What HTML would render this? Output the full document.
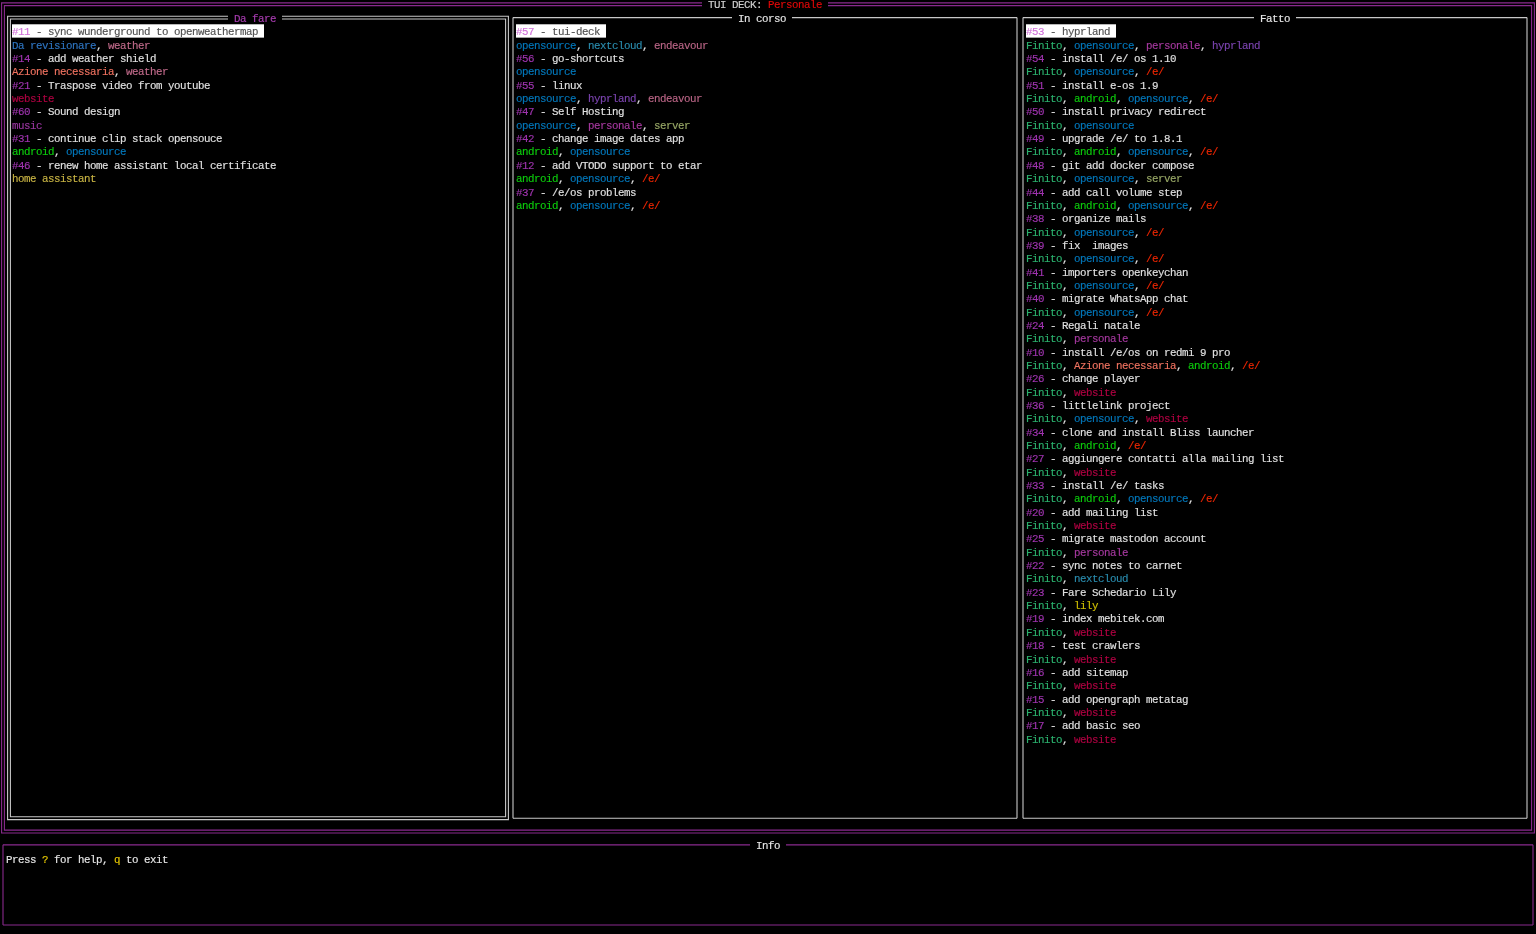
<!DOCTYPE html>
<html><head><meta charset="utf-8"><title>TUI DECK</title>
<style>
html,body{margin:0;padding:0;background:#000;}
body{width:1536px;height:934px;overflow:hidden;position:relative;}
.w{position:absolute;left:0;top:0;width:1536px;height:934px;background:#000;}
svg{position:absolute;left:0;top:0;}
.t{position:absolute;left:0;top:0;width:1536px;height:934px;will-change:transform;}
.l{position:absolute;white-space:pre;font-family:"Liberation Mono",monospace;font-size:10.8px;letter-spacing:-0.481px;line-height:13.343px;height:13.343px;color:#e6e6e6;-webkit-text-stroke:0.15px currentColor;}
.hl{background:#ffffff;}
</style></head><body><div class="w">
<svg width="1536" height="934" viewBox="0 0 1536 934">
<path d="M702.00 2.87H1.60V832.93H1534.40V2.87H828.00" stroke="#8a2a8e" stroke-width="1.1" fill="none"/>
<path d="M702.00 5.67H4.40V830.13H1531.60V5.67H828.00" stroke="#8a2a8e" stroke-width="1.1" fill="none"/>
<path d="M228.00 16.21H7.60V819.59H508.40V16.21H282.00" stroke="#c8c8c8" stroke-width="1.1" fill="none"/>
<path d="M228.00 19.01H10.40V816.79H505.60V19.01H282.00" stroke="#c8c8c8" stroke-width="1.1" fill="none"/>
<path d="M513.00 17.61H732.00" stroke="#c8c8c8" stroke-width="1.1" fill="none"/>
<path d="M792.00 17.61H1017.00" stroke="#c8c8c8" stroke-width="1.1" fill="none"/>
<path d="M513.00 818.19H1017.00" stroke="#c8c8c8" stroke-width="1.1" fill="none"/>
<path d="M513.00 17.61V818.19" stroke="#c8c8c8" stroke-width="1.1" fill="none"/>
<path d="M1017.00 17.61V818.19" stroke="#c8c8c8" stroke-width="1.1" fill="none"/>
<path d="M1023.00 17.61H1254.00" stroke="#c8c8c8" stroke-width="1.1" fill="none"/>
<path d="M1296.00 17.61H1527.00" stroke="#c8c8c8" stroke-width="1.1" fill="none"/>
<path d="M1023.00 818.19H1527.00" stroke="#c8c8c8" stroke-width="1.1" fill="none"/>
<path d="M1023.00 17.61V818.19" stroke="#c8c8c8" stroke-width="1.1" fill="none"/>
<path d="M1527.00 17.61V818.19" stroke="#c8c8c8" stroke-width="1.1" fill="none"/>
<path d="M3.00 844.87H750.00" stroke="#8a2a8e" stroke-width="1.1" fill="none"/>
<path d="M786.00 844.87H1533.00" stroke="#8a2a8e" stroke-width="1.1" fill="none"/>
<path d="M3.00 924.93H1533.00" stroke="#8a2a8e" stroke-width="1.1" fill="none"/>
<path d="M3.00 844.87V924.93" stroke="#8a2a8e" stroke-width="1.1" fill="none"/>
<path d="M1533.00 844.87V924.93" stroke="#8a2a8e" stroke-width="1.1" fill="none"/>
<rect x="12.00" y="24.29" width="252.00" height="13.343" fill="#ffffff"/>
<rect x="516.00" y="24.29" width="90.00" height="13.343" fill="#ffffff"/>
<rect x="1026.00" y="24.29" width="90.00" height="13.343" fill="#ffffff"/>
</svg>
<div class="t">
<div class="l" style="left:708px;top:-1.30px"><span style="color:#d0d0d0">TUI DECK: </span><span style="color:#e00808">Personale</span></div>
<div class="l" style="left:234px;top:13.04px"><span style="color:#a83cb0">Da fare</span></div>
<div class="l" style="left:738px;top:13.04px"><span style="color:#e6e6e6">In corso</span></div>
<div class="l" style="left:1260px;top:13.04px"><span style="color:#e6e6e6">Fatto</span></div>
<div class="l" style="left:756px;top:840.30px"><span style="color:#e6e6e6">Info</span></div>
<div class="l" style="left:6px;top:853.64px"><span style="color:#e6e6e6">Press </span><span style="color:#e6c800">?</span><span style="color:#e6e6e6"> for help, </span><span style="color:#e6c800">q</span><span style="color:#e6e6e6"> to exit</span></div>
<div class="l" style="left:12px;top:26.39px"><span style="color:#d070d8">#11</span><span style="color:#505050"> - sync wunderground to openweathermap </span></div>
<div class="l" style="left:12px;top:39.73px"><span style="color:#2e74c0">Da revisionare</span><span style="color:#e0e0e0">, </span><span style="color:#c06a8a">weather</span></div>
<div class="l" style="left:12px;top:53.07px"><span style="color:#a034b0">#14</span><span style="color:#e0e0e0"> - add weather shield</span></div>
<div class="l" style="left:12px;top:66.41px"><span style="color:#f07260">Azione necessaria</span><span style="color:#e0e0e0">, </span><span style="color:#c06a8a">weather</span></div>
<div class="l" style="left:12px;top:79.76px"><span style="color:#a034b0">#21</span><span style="color:#e0e0e0"> - Traspose video from youtube</span></div>
<div class="l" style="left:12px;top:93.10px"><span style="color:#b00042">website</span></div>
<div class="l" style="left:12px;top:106.44px"><span style="color:#a034b0">#60</span><span style="color:#e0e0e0"> - Sound design</span></div>
<div class="l" style="left:12px;top:119.79px"><span style="color:#9a36a0">music</span></div>
<div class="l" style="left:12px;top:133.13px"><span style="color:#a034b0">#31</span><span style="color:#e0e0e0"> - continue clip stack opensouce</span></div>
<div class="l" style="left:12px;top:146.47px"><span style="color:#0ccc0c">android</span><span style="color:#e0e0e0">, </span><span style="color:#0078bc">opensource</span></div>
<div class="l" style="left:12px;top:159.81px"><span style="color:#a034b0">#46</span><span style="color:#e0e0e0"> - renew home assistant local certificate</span></div>
<div class="l" style="left:12px;top:173.16px"><span style="color:#c8b444">home assistant</span></div>
<div class="l" style="left:516px;top:26.39px"><span style="color:#d070d8">#57</span><span style="color:#505050"> - tui-deck </span></div>
<div class="l" style="left:516px;top:39.73px"><span style="color:#0078bc">opensource</span><span style="color:#e0e0e0">, </span><span style="color:#2a8cae">nextcloud</span><span style="color:#e0e0e0">, </span><span style="color:#ba6586">endeavour</span></div>
<div class="l" style="left:516px;top:53.07px"><span style="color:#a034b0">#56</span><span style="color:#e0e0e0"> - go-shortcuts</span></div>
<div class="l" style="left:516px;top:66.41px"><span style="color:#0078bc">opensource</span></div>
<div class="l" style="left:516px;top:79.76px"><span style="color:#a034b0">#55</span><span style="color:#e0e0e0"> - linux</span></div>
<div class="l" style="left:516px;top:93.10px"><span style="color:#0078bc">opensource</span><span style="color:#e0e0e0">, </span><span style="color:#7c44b0">hyprland</span><span style="color:#e0e0e0">, </span><span style="color:#ba6586">endeavour</span></div>
<div class="l" style="left:516px;top:106.44px"><span style="color:#a034b0">#47</span><span style="color:#e0e0e0"> - Self Hosting</span></div>
<div class="l" style="left:516px;top:119.79px"><span style="color:#0078bc">opensource</span><span style="color:#e0e0e0">, </span><span style="color:#a6389f">personale</span><span style="color:#e0e0e0">, </span><span style="color:#98a866">server</span></div>
<div class="l" style="left:516px;top:133.13px"><span style="color:#a034b0">#42</span><span style="color:#e0e0e0"> - change image dates app</span></div>
<div class="l" style="left:516px;top:146.47px"><span style="color:#0ccc0c">android</span><span style="color:#e0e0e0">, </span><span style="color:#0078bc">opensource</span></div>
<div class="l" style="left:516px;top:159.81px"><span style="color:#a034b0">#12</span><span style="color:#e0e0e0"> - add VTODO support to etar</span></div>
<div class="l" style="left:516px;top:173.16px"><span style="color:#0ccc0c">android</span><span style="color:#e0e0e0">, </span><span style="color:#0078bc">opensource</span><span style="color:#e0e0e0">, </span><span style="color:#ec2600">/e/</span></div>
<div class="l" style="left:516px;top:186.50px"><span style="color:#a034b0">#37</span><span style="color:#e0e0e0"> - /e/os problems</span></div>
<div class="l" style="left:516px;top:199.84px"><span style="color:#0ccc0c">android</span><span style="color:#e0e0e0">, </span><span style="color:#0078bc">opensource</span><span style="color:#e0e0e0">, </span><span style="color:#ec2600">/e/</span></div>
<div class="l" style="left:1026px;top:26.39px"><span style="color:#d070d8">#53</span><span style="color:#505050"> - hyprland </span></div>
<div class="l" style="left:1026px;top:39.73px"><span style="color:#2bb26e">Finito</span><span style="color:#e0e0e0">, </span><span style="color:#0078bc">opensource</span><span style="color:#e0e0e0">, </span><span style="color:#a6389f">personale</span><span style="color:#e0e0e0">, </span><span style="color:#7c44b0">hyprland</span></div>
<div class="l" style="left:1026px;top:53.07px"><span style="color:#a034b0">#54</span><span style="color:#e0e0e0"> - install /e/ os 1.10</span></div>
<div class="l" style="left:1026px;top:66.41px"><span style="color:#2bb26e">Finito</span><span style="color:#e0e0e0">, </span><span style="color:#0078bc">opensource</span><span style="color:#e0e0e0">, </span><span style="color:#ec2600">/e/</span></div>
<div class="l" style="left:1026px;top:79.76px"><span style="color:#a034b0">#51</span><span style="color:#e0e0e0"> - install e-os 1.9</span></div>
<div class="l" style="left:1026px;top:93.10px"><span style="color:#2bb26e">Finito</span><span style="color:#e0e0e0">, </span><span style="color:#0ccc0c">android</span><span style="color:#e0e0e0">, </span><span style="color:#0078bc">opensource</span><span style="color:#e0e0e0">, </span><span style="color:#ec2600">/e/</span></div>
<div class="l" style="left:1026px;top:106.44px"><span style="color:#a034b0">#50</span><span style="color:#e0e0e0"> - install privacy redirect</span></div>
<div class="l" style="left:1026px;top:119.79px"><span style="color:#2bb26e">Finito</span><span style="color:#e0e0e0">, </span><span style="color:#0078bc">opensource</span></div>
<div class="l" style="left:1026px;top:133.13px"><span style="color:#a034b0">#49</span><span style="color:#e0e0e0"> - upgrade /e/ to 1.8.1</span></div>
<div class="l" style="left:1026px;top:146.47px"><span style="color:#2bb26e">Finito</span><span style="color:#e0e0e0">, </span><span style="color:#0ccc0c">android</span><span style="color:#e0e0e0">, </span><span style="color:#0078bc">opensource</span><span style="color:#e0e0e0">, </span><span style="color:#ec2600">/e/</span></div>
<div class="l" style="left:1026px;top:159.81px"><span style="color:#a034b0">#48</span><span style="color:#e0e0e0"> - git add docker compose</span></div>
<div class="l" style="left:1026px;top:173.16px"><span style="color:#2bb26e">Finito</span><span style="color:#e0e0e0">, </span><span style="color:#0078bc">opensource</span><span style="color:#e0e0e0">, </span><span style="color:#98a866">server</span></div>
<div class="l" style="left:1026px;top:186.50px"><span style="color:#a034b0">#44</span><span style="color:#e0e0e0"> - add call volume step</span></div>
<div class="l" style="left:1026px;top:199.84px"><span style="color:#2bb26e">Finito</span><span style="color:#e0e0e0">, </span><span style="color:#0ccc0c">android</span><span style="color:#e0e0e0">, </span><span style="color:#0078bc">opensource</span><span style="color:#e0e0e0">, </span><span style="color:#ec2600">/e/</span></div>
<div class="l" style="left:1026px;top:213.19px"><span style="color:#a034b0">#38</span><span style="color:#e0e0e0"> - organize mails</span></div>
<div class="l" style="left:1026px;top:226.53px"><span style="color:#2bb26e">Finito</span><span style="color:#e0e0e0">, </span><span style="color:#0078bc">opensource</span><span style="color:#e0e0e0">, </span><span style="color:#ec2600">/e/</span></div>
<div class="l" style="left:1026px;top:239.87px"><span style="color:#a034b0">#39</span><span style="color:#e0e0e0"> - fix  images</span></div>
<div class="l" style="left:1026px;top:253.21px"><span style="color:#2bb26e">Finito</span><span style="color:#e0e0e0">, </span><span style="color:#0078bc">opensource</span><span style="color:#e0e0e0">, </span><span style="color:#ec2600">/e/</span></div>
<div class="l" style="left:1026px;top:266.56px"><span style="color:#a034b0">#41</span><span style="color:#e0e0e0"> - importers openkeychan</span></div>
<div class="l" style="left:1026px;top:279.90px"><span style="color:#2bb26e">Finito</span><span style="color:#e0e0e0">, </span><span style="color:#0078bc">opensource</span><span style="color:#e0e0e0">, </span><span style="color:#ec2600">/e/</span></div>
<div class="l" style="left:1026px;top:293.24px"><span style="color:#a034b0">#40</span><span style="color:#e0e0e0"> - migrate WhatsApp chat</span></div>
<div class="l" style="left:1026px;top:306.59px"><span style="color:#2bb26e">Finito</span><span style="color:#e0e0e0">, </span><span style="color:#0078bc">opensource</span><span style="color:#e0e0e0">, </span><span style="color:#ec2600">/e/</span></div>
<div class="l" style="left:1026px;top:319.93px"><span style="color:#a034b0">#24</span><span style="color:#e0e0e0"> - Regali natale</span></div>
<div class="l" style="left:1026px;top:333.27px"><span style="color:#2bb26e">Finito</span><span style="color:#e0e0e0">, </span><span style="color:#a6389f">personale</span></div>
<div class="l" style="left:1026px;top:346.61px"><span style="color:#a034b0">#10</span><span style="color:#e0e0e0"> - install /e/os on redmi 9 pro</span></div>
<div class="l" style="left:1026px;top:359.96px"><span style="color:#2bb26e">Finito</span><span style="color:#e0e0e0">, </span><span style="color:#f07260">Azione necessaria</span><span style="color:#e0e0e0">, </span><span style="color:#0ccc0c">android</span><span style="color:#e0e0e0">, </span><span style="color:#ec2600">/e/</span></div>
<div class="l" style="left:1026px;top:373.30px"><span style="color:#a034b0">#26</span><span style="color:#e0e0e0"> - change player</span></div>
<div class="l" style="left:1026px;top:386.64px"><span style="color:#2bb26e">Finito</span><span style="color:#e0e0e0">, </span><span style="color:#b00042">website</span></div>
<div class="l" style="left:1026px;top:399.99px"><span style="color:#a034b0">#36</span><span style="color:#e0e0e0"> - littlelink project</span></div>
<div class="l" style="left:1026px;top:413.33px"><span style="color:#2bb26e">Finito</span><span style="color:#e0e0e0">, </span><span style="color:#0078bc">opensource</span><span style="color:#e0e0e0">, </span><span style="color:#b00042">website</span></div>
<div class="l" style="left:1026px;top:426.67px"><span style="color:#a034b0">#34</span><span style="color:#e0e0e0"> - clone and install Bliss launcher</span></div>
<div class="l" style="left:1026px;top:440.01px"><span style="color:#2bb26e">Finito</span><span style="color:#e0e0e0">, </span><span style="color:#0ccc0c">android</span><span style="color:#e0e0e0">, </span><span style="color:#ec2600">/e/</span></div>
<div class="l" style="left:1026px;top:453.36px"><span style="color:#a034b0">#27</span><span style="color:#e0e0e0"> - aggiungere contatti alla mailing list</span></div>
<div class="l" style="left:1026px;top:466.70px"><span style="color:#2bb26e">Finito</span><span style="color:#e0e0e0">, </span><span style="color:#b00042">website</span></div>
<div class="l" style="left:1026px;top:480.04px"><span style="color:#a034b0">#33</span><span style="color:#e0e0e0"> - install /e/ tasks</span></div>
<div class="l" style="left:1026px;top:493.39px"><span style="color:#2bb26e">Finito</span><span style="color:#e0e0e0">, </span><span style="color:#0ccc0c">android</span><span style="color:#e0e0e0">, </span><span style="color:#0078bc">opensource</span><span style="color:#e0e0e0">, </span><span style="color:#ec2600">/e/</span></div>
<div class="l" style="left:1026px;top:506.73px"><span style="color:#a034b0">#20</span><span style="color:#e0e0e0"> - add mailing list</span></div>
<div class="l" style="left:1026px;top:520.07px"><span style="color:#2bb26e">Finito</span><span style="color:#e0e0e0">, </span><span style="color:#b00042">website</span></div>
<div class="l" style="left:1026px;top:533.41px"><span style="color:#a034b0">#25</span><span style="color:#e0e0e0"> - migrate mastodon account</span></div>
<div class="l" style="left:1026px;top:546.76px"><span style="color:#2bb26e">Finito</span><span style="color:#e0e0e0">, </span><span style="color:#a6389f">personale</span></div>
<div class="l" style="left:1026px;top:560.10px"><span style="color:#a034b0">#22</span><span style="color:#e0e0e0"> - sync notes to carnet</span></div>
<div class="l" style="left:1026px;top:573.44px"><span style="color:#2bb26e">Finito</span><span style="color:#e0e0e0">, </span><span style="color:#2a8cae">nextcloud</span></div>
<div class="l" style="left:1026px;top:586.79px"><span style="color:#a034b0">#23</span><span style="color:#e0e0e0"> - Fare Schedario Lily</span></div>
<div class="l" style="left:1026px;top:600.13px"><span style="color:#2bb26e">Finito</span><span style="color:#e0e0e0">, </span><span style="color:#d0c000">lily</span></div>
<div class="l" style="left:1026px;top:613.47px"><span style="color:#a034b0">#19</span><span style="color:#e0e0e0"> - index mebitek.com</span></div>
<div class="l" style="left:1026px;top:626.81px"><span style="color:#2bb26e">Finito</span><span style="color:#e0e0e0">, </span><span style="color:#b00042">website</span></div>
<div class="l" style="left:1026px;top:640.16px"><span style="color:#a034b0">#18</span><span style="color:#e0e0e0"> - test crawlers</span></div>
<div class="l" style="left:1026px;top:653.50px"><span style="color:#2bb26e">Finito</span><span style="color:#e0e0e0">, </span><span style="color:#b00042">website</span></div>
<div class="l" style="left:1026px;top:666.84px"><span style="color:#a034b0">#16</span><span style="color:#e0e0e0"> - add sitemap</span></div>
<div class="l" style="left:1026px;top:680.19px"><span style="color:#2bb26e">Finito</span><span style="color:#e0e0e0">, </span><span style="color:#b00042">website</span></div>
<div class="l" style="left:1026px;top:693.53px"><span style="color:#a034b0">#15</span><span style="color:#e0e0e0"> - add opengraph metatag</span></div>
<div class="l" style="left:1026px;top:706.87px"><span style="color:#2bb26e">Finito</span><span style="color:#e0e0e0">, </span><span style="color:#b00042">website</span></div>
<div class="l" style="left:1026px;top:720.21px"><span style="color:#a034b0">#17</span><span style="color:#e0e0e0"> - add basic seo</span></div>
<div class="l" style="left:1026px;top:733.56px"><span style="color:#2bb26e">Finito</span><span style="color:#e0e0e0">, </span><span style="color:#b00042">website</span></div>
</div>
</div></body></html>
